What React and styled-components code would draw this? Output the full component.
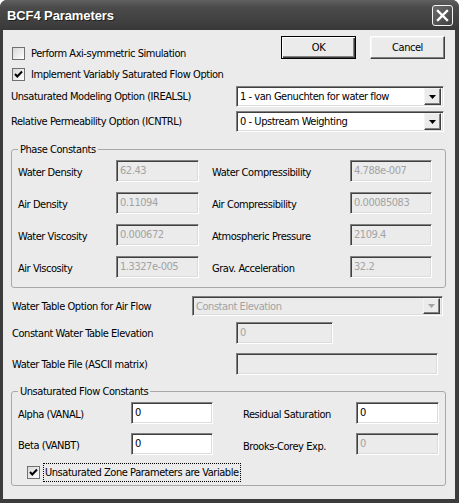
import React from "react";
import styled, { createGlobalStyle } from "styled-components";

const GlobalStyle = createGlobalStyle`
  html, body {
    margin: 0;
    padding: 0;
    background: #ffffff;
  }
  body {
    font-family: "DejaVu Sans Condensed", "Liberation Sans", Arial, sans-serif;
    font-size: 11px;
    letter-spacing: -0.45px;
    color: #000;
  }
`;

const Window = styled.div`
  width: 459px;
  height: 503px;
  display: flex;
  flex-direction: column;
  background: #3c3c3c;
  border-radius: 7px 7px 0 0;
  overflow: hidden;
`;

const TitleBar = styled.div`
  height: 30px;
  flex-shrink: 0;
  display: flex;
  align-items: center;
  justify-content: space-between;
  padding: 0 6px 0 7px;
  background: linear-gradient(#606060, #4a4a4a 25%, #3f3f3f 75%, #383838);
`;

const Title = styled.span`
  color: #fff;
  font-family: "Liberation Sans", Arial, sans-serif;
  font-weight: bold;
  font-size: 13px;
  letter-spacing: -0.1px;
  text-shadow: 1px 1px 0 #202020;
`;

const CloseButton = styled.div`
  width: 21px;
  height: 21px;
  box-sizing: border-box;
  border: 1px solid #f4f4f4;
  border-radius: 3px;
  background: linear-gradient(135deg, #6c6c6c, #404040);
  display: flex;
  align-items: center;
  justify-content: center;
`;

const Frame = styled.div`
  flex: 1;
  display: flex;
  padding: 0 4px 4px 3px;
`;

const Client = styled.div`
  flex: 1;
  background: #ebebeb;
  padding: 6px 9px 0 8px;
  display: flex;
  flex-direction: column;
`;

const Top = styled.div`
  display: flex;
  justify-content: space-between;
  align-items: flex-start;
`;

const CheckList = styled.div`
  display: flex;
  flex-direction: column;
  gap: 8px;
  padding-top: ${(p) => p.$top || 0}px;
`;

const CheckRow = styled.label`
  display: flex;
  align-items: center;
  gap: ${(p) => p.$gap || 6}px;
  height: ${(p) => p.$height || 13}px;
  margin-left: ${(p) => p.$indent || 1}px;
`;

const Box = styled.span`
  width: 13px;
  height: 13px;
  box-sizing: border-box;
  border: 1px solid #707070;
  background: linear-gradient(135deg, #d8d8d8, #ffffff);
  display: flex;
  align-items: center;
  justify-content: center;
  flex-shrink: 0;
`;

const FocusText = styled.span`
  border: 1px dotted #000;
  padding: 2px 1px;
  line-height: 13px;
`;

const Buttons = styled.div`
  display: flex;
  gap: 14px;
  margin-right: 1px;
`;

const Button = styled.div`
  width: 75px;
  height: 23px;
  box-sizing: border-box;
  display: flex;
  align-items: center;
  justify-content: center;
  background: #ebebeb;
  border: 1px solid;
  border-color: ${(p) => (p.$default ? "#000" : "#fff #404040 #404040 #fff")};
  box-shadow: ${(p) =>
    p.$default
      ? "inset 1px 1px 0 #fff, inset -1px -1px 0 #404040, inset -2px -2px 0 #808080"
      : "inset -1px -1px 0 #808080, inset 1px 1px 0 #f4f4f4"};
`;

const OptionRow = styled.div`
  display: flex;
  align-items: center;
  justify-content: space-between;
  height: ${(p) => p.$height || 21}px;
  margin-top: ${(p) => p.$top || 0}px;
  padding-left: ${(p) => p.$pad || 0}px;
`;

const Combo = styled.div`
  width: ${(p) => p.$width}px;
  height: ${(p) => p.$height || 21}px;
  margin-right: ${(p) => p.$right || 0}px;
  box-sizing: border-box;
  display: flex;
  align-items: center;
  background: ${(p) => (p.$disabled ? "#ebebeb" : "#fff")};
  color: ${(p) => (p.$disabled ? "#a3a3a3" : "#000")};
  border: 1px solid;
  border-color: #808080 #fff #fff #808080;
  box-shadow: inset 1px 1px 0 #404040, inset -1px -1px 0 #dcdcdc;
  padding: 1px 2px 1px 2px;
`;

const ComboText = styled.span`
  flex: 1;
  padding-left: 1px;
  white-space: nowrap;
  overflow: hidden;
`;

const DropButton = styled.span`
  width: 17px;
  height: 100%;
  box-sizing: border-box;
  display: flex;
  align-items: center;
  justify-content: center;
  background: #ebebeb;
  border: 1px solid;
  border-color: #f4f4f4 #404040 #404040 #f4f4f4;
  box-shadow: inset -1px -1px 0 #808080;
`;

const Group = styled.fieldset`
  margin: ${(p) => p.$top || 0}px 0 0;
  padding: 4px 0 ${(p) => p.$bottom || 0}px 6px;
  border: 1px solid #a8a8a8;
  border-radius: 3px;
  min-width: 0;
`;

const Legend = styled.legend`
  padding: 0 2px;
  line-height: 13px;
`;

const Columns = styled.div`
  display: flex;
  gap: ${(p) => p.$gap}px;
`;

const PairGrid = styled.div`
  display: grid;
  grid-template-columns: ${(p) => p.$label}px ${(p) => p.$input}px;
  grid-auto-rows: 22px;
  row-gap: ${(p) => p.$rowGap}px;
  align-items: center;
`;

const Label = styled.span`
  white-space: nowrap;
  width: ${(p) => (p.$width ? `${p.$width}px` : "auto")};
  flex-shrink: 0;
  padding-top: ${(p) => p.$drop || 0}px;
`;

const Field = styled.div`
  width: ${(p) => (p.$width ? `${p.$width}px` : "auto")};
  height: 22px;
  box-sizing: border-box;
  background: ${(p) => (p.$disabled ? "#ebebeb" : "#fff")};
  color: ${(p) => (p.$disabled ? "#a3a3a3" : "#000")};
  border: 1px solid;
  border-color: #808080 #fff #fff #808080;
  box-shadow: inset 1px 1px 0 #404040, inset -1px -1px 0 #dcdcdc;
  padding: 3px 3px 0;
  line-height: 13px;
  white-space: nowrap;
  overflow: hidden;
`;

const FieldRow = styled.div`
  display: flex;
  align-items: center;
  height: 22px;
  margin-top: ${(p) => p.$top || 0}px;
  padding-left: 1px;
`;

const Arrow = ({ color = "#000" }) => (
  <svg width="7" height="4" viewBox="0 0 7 4">
    <path d="M0 0H7L3.5 4Z" fill={color} />
  </svg>
);

const Check = () => (
  <svg width="9" height="9" viewBox="0 0 9 9">
    <path d="M1 4L3.3 6.5L8 1.5" fill="none" stroke="#000" strokeWidth="2" />
  </svg>
);

const CheckBox = ({ checked }) => <Box>{checked && <Check />}</Box>;

const phaseLeft = [
  ["Water Density", "62.43"],
  ["Air Density", "0.11094"],
  ["Water Viscosity", "0.000672"],
  ["Air Viscosity", "1.3327e-005"],
];

const phaseRight = [
  ["Water Compressibility", "4.788e-007"],
  ["Air Compressibility", "0.00085083"],
  ["Atmospheric Pressure", "2109.4"],
  ["Grav. Acceleration", "32.2"],
];

export default function App() {
  return (
    <>
      <GlobalStyle />
      <Window>
        <TitleBar>
          <Title>BCF4 Parameters</Title>
          <CloseButton>
            <svg width="13" height="13" viewBox="0 0 13 13">
              <path
                d="M2 2L11 11M11 2L2 11"
                stroke="#fff"
                strokeWidth="2.4"
                strokeLinecap="square"
              />
            </svg>
          </CloseButton>
        </TitleBar>
        <Frame>
          <Client>
            <Top>
              <CheckList $top={11}>
                <CheckRow>
                  <CheckBox />
                  <span>Perform Axi-symmetric Simulation</span>
                </CheckRow>
                <CheckRow>
                  <CheckBox checked />
                  <span>Implement Variably Saturated Flow Option</span>
                </CheckRow>
              </CheckList>
              <Buttons>
                <Button $default>OK</Button>
                <Button>Cancel</Button>
              </Buttons>
            </Top>

            <OptionRow $top={5}>
              <Label>Unsaturated Modeling Option (IREALSL)</Label>
              <Combo $width={208} $right={2}>
                <ComboText>1 - van Genuchten for water flow</ComboText>
                <DropButton>
                  <Arrow />
                </DropButton>
              </Combo>
            </OptionRow>
            <OptionRow $top={4}>
              <Label>Relative Permeability Option (ICNTRL)</Label>
              <Combo $width={208} $right={2}>
                <ComboText>0 - Upstream Weighting</ComboText>
                <DropButton>
                  <Arrow />
                </DropButton>
              </Combo>
            </OptionRow>

            <Group $top={11} $bottom={9}>
              <Legend>Phase Constants</Legend>
              <Columns $gap={13}>
                <PairGrid $label={98} $input={83} $rowGap={10}>
                  {phaseLeft.map(([name, value]) => (
                    <React.Fragment key={name}>
                      <Label $drop={2}>{name}</Label>
                      <Field $disabled>{value}</Field>
                    </React.Fragment>
                  ))}
                </PairGrid>
                <PairGrid $label={138} $input={82} $rowGap={10}>
                  {phaseRight.map(([name, value]) => (
                    <React.Fragment key={name}>
                      <Label $drop={2}>{name}</Label>
                      <Field $disabled>{value}</Field>
                    </React.Fragment>
                  ))}
                </PairGrid>
              </Columns>
            </Group>

            <OptionRow $top={8} $height={20} $pad={1}>
              <Label>Water Table Option for Air Flow</Label>
              <Combo $width={251} $height={20} $right={3} $disabled>
                <ComboText>Constant Elevation</ComboText>
                <DropButton>
                  <Arrow color="#a3a3a3" />
                </DropButton>
              </Combo>
            </OptionRow>
            <FieldRow $top={6}>
              <Label $width={224}>Constant Water Table Elevation</Label>
              <Field $width={97} $disabled>
                0
              </Field>
            </FieldRow>
            <FieldRow $top={9}>
              <Label $width={224}>Water Table File (ASCII matrix)</Label>
              <Field $width={202} $disabled />
            </FieldRow>

            <Group $top={10} $bottom={7}>
              <Legend>Unsaturated Flow Constants</Legend>
              <Columns $gap={30}>
                <PairGrid $label={113} $input={82} $rowGap={9}>
                  <Label $drop={3}>Alpha (VANAL)</Label>
                  <Field>0</Field>
                  <Label $drop={3}>Beta (VANBT)</Label>
                  <Field>0</Field>
                </PairGrid>
                <PairGrid $label={113} $input={83} $rowGap={9}>
                  <Label $drop={3}>Residual Saturation</Label>
                  <Field>0</Field>
                  <Label $drop={5}>Brooks-Corey Exp.</Label>
                  <Field $disabled>0</Field>
                </PairGrid>
              </Columns>
              <CheckList $top={12}>
                <CheckRow $indent={9} $gap={3} $height={11}>
                  <CheckBox checked />
                  <FocusText>Unsaturated Zone Parameters are Variable</FocusText>
                </CheckRow>
              </CheckList>
            </Group>
          </Client>
        </Frame>
      </Window>
    </>
  );
}
